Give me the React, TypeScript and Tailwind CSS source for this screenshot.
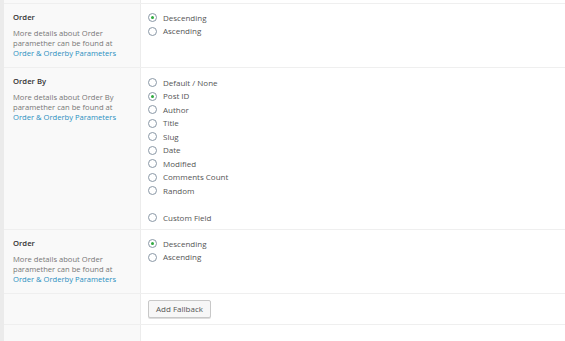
import React from "react";

const font = { fontFamily: '"Open Sans", "Noto Sans", sans-serif' };

function Radio({ label, checked }: { label: string; checked?: boolean }) {
  return (
    <div className="flex items-center h-[13.5px]">
      <span className="w-[9px] h-[9px] rounded-full border border-[#8a98a6] bg-white flex items-center justify-center shrink-0">
        {checked && <span className="w-[3px] h-[3px] rounded-full bg-[#2faa3f]" />}
      </span>
      <span className="ml-[6px] text-[8px] text-[#555] leading-none">{label}</span>
    </div>
  );
}

function Label({ title }: { title: string }) {
  return (
    <div className="pl-[9px] pt-[8px]">
      <div className="text-[7.7px] font-semibold text-[#333] leading-[10px]">{title}</div>
      <div className="mt-[6px] text-[7.6px] text-[#777] leading-[10px]">
        <div>More details about {title}</div>
        <div>paramether can be found at</div>
        <div className="text-[#2a8fc0]">Order &amp; Orderby Parameters</div>
      </div>
    </div>
  );
}

function Row({ h, left, children }: { h: string; left?: React.ReactNode; children?: React.ReactNode }) {
  return (
    <div className={`grid grid-cols-[137px_1fr] border-b border-[#efefef] ${h}`}>
      <div className="bg-[#f9f9f9] border-r border-[#ececec]">{left}</div>
      <div className="bg-white">{children}</div>
    </div>
  );
}

export default function App() {
  return (
    <div className="w-[565px] h-[341px] overflow-hidden flex bg-white" style={font}>
      <div className="w-[4px] bg-[#ebebeb] shrink-0" />
      <div className="flex-1 flex flex-col">
        <Row h="h-[4px]" />
        <Row h="h-[64px]" left={<Label title="Order" />}>
          <div className="pl-[7px] pt-[7px]">
            <Radio label="Descending" checked />
            <Radio label="Ascending" />
          </div>
        </Row>
        <Row h="h-[162px]" left={<Label title="Order By" />}>
          <div className="pl-[7px] pt-[8px]">
            <Radio label="Default / None" />
            <Radio label="Post ID" checked />
            <Radio label="Author" />
            <Radio label="Title" />
            <Radio label="Slug" />
            <Radio label="Date" />
            <Radio label="Modified" />
            <Radio label="Comments Count" />
            <Radio label="Random" />
            <div className="h-[13.5px]" />
            <Radio label="Custom Field" />
          </div>
        </Row>
        <Row h="h-[64px]" left={<Label title="Order" />}>
          <div className="pl-[7px] pt-[7px]">
            <Radio label="Descending" checked />
            <Radio label="Ascending" />
          </div>
        </Row>
        <Row h="h-[31px]">
          <div className="flex pl-[7px] pt-[6px]">
            <button className="flex items-center justify-center h-[18px] w-[63px] border border-[#c8c8c8] rounded-[2px] bg-[#f7f7f7] text-[8px] text-[#555] shadow-[0_1px_0_#ddd] leading-none">
              Add Fallback
            </button>
          </div>
        </Row>
        <div className="grid grid-cols-[137px_1fr] flex-1">
          <div className="bg-[#f9f9f9] border-r border-[#ececec]" />
          <div className="bg-white" />
        </div>
      </div>
    </div>
  );
}
